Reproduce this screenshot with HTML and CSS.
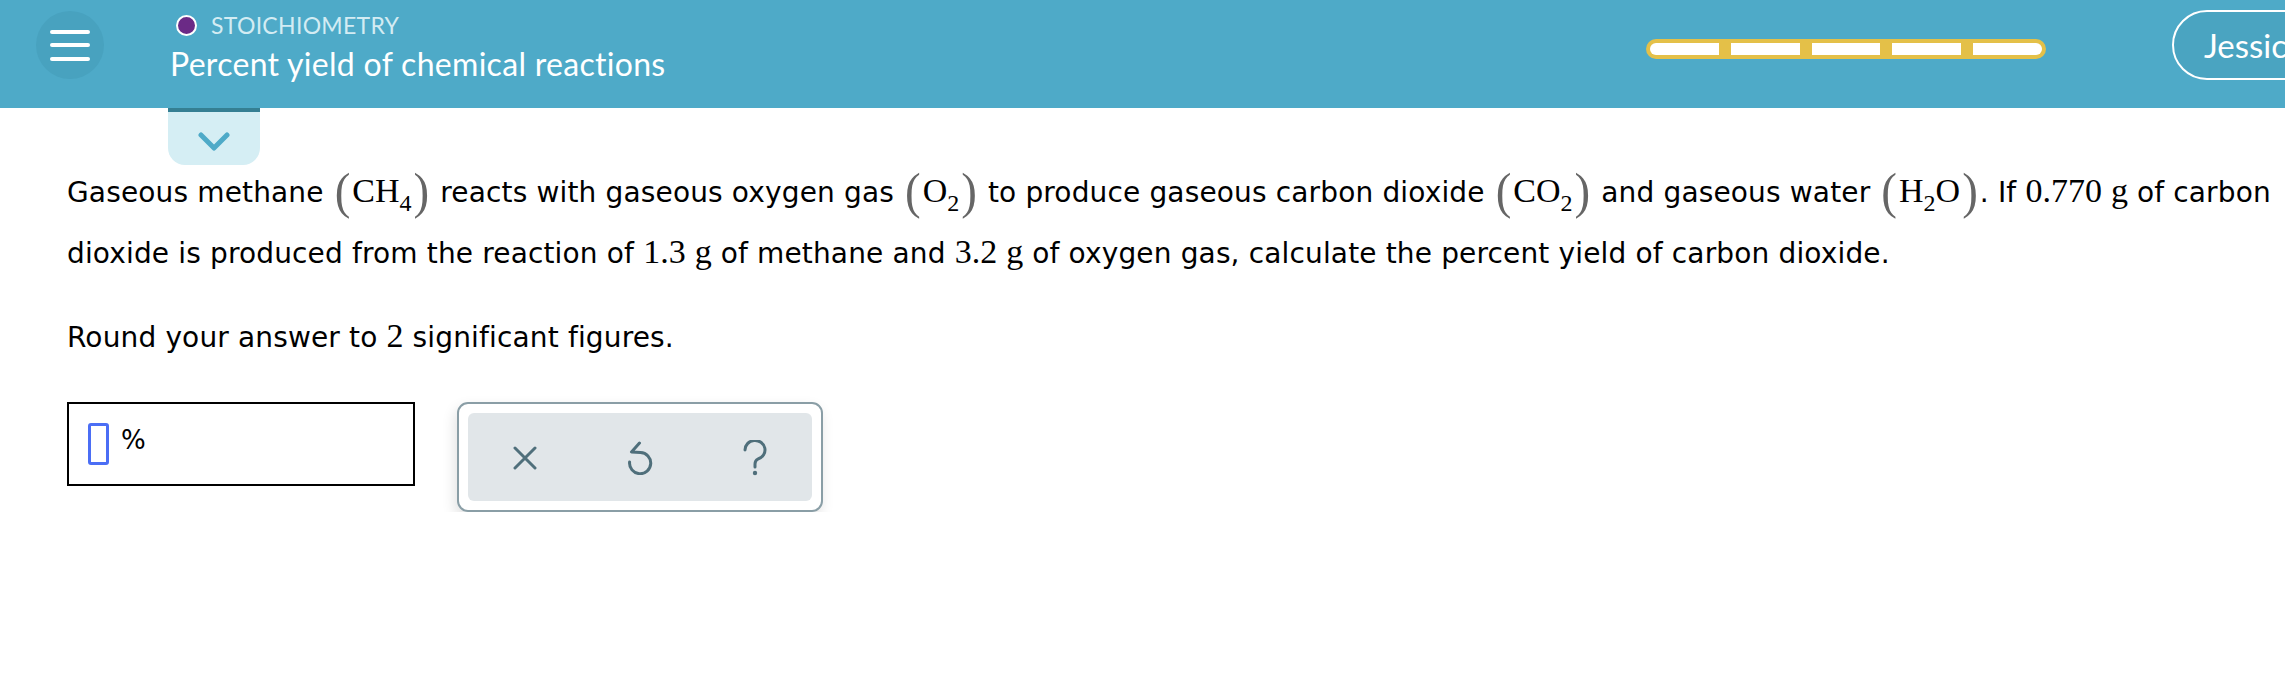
FILE: index.html
```html
<!DOCTYPE html>
<html lang="en">
<head>
<meta charset="utf-8">
<title>Percent yield of chemical reactions</title>
<link rel="stylesheet" href="styles.css">
</head>
<body>
<header class="topbar">
  <button class="menu-btn" aria-label="Menu">
    <span class="menu-line"></span>
    <span class="menu-line"></span>
    <span class="menu-line"></span>
  </button>
  <div class="title-block">
    <div class="topic"><span class="topic-dot"></span><span class="topic-name">STOICHIOMETRY</span></div>
    <div class="lesson">Percent yield of chemical reactions</div>
  </div>
  <div class="progress">
    <span class="seg"></span><span class="seg"></span><span class="seg"></span><span class="seg"></span><span class="seg"></span>
  </div>
  <div class="user-btn">Jessica</div>
</header>

<main class="content">
  <div class="tab">
    <svg class="chev" viewBox="0 0 32 20" width="32" height="20"><path d="M3 3 L16 16 L29 3" fill="none" stroke="#4eaac8" stroke-width="5" stroke-linecap="round" stroke-linejoin="round"/></svg>
  </div>

  <p class="problem first">Gaseous methane <span class="math"><span class="paren">(</span><span class="mi">CH<span class="sub">4</span></span><span class="paren">)</span></span> reacts with gaseous oxygen gas <span class="math"><span class="paren">(</span><span class="mi">O<span class="sub">2</span></span><span class="paren">)</span></span> to produce gaseous carbon dioxide <span class="math"><span class="paren">(</span><span class="mi">CO<span class="sub">2</span></span><span class="paren">)</span></span> and gaseous water <span class="math"><span class="paren">(</span><span class="mi">H<span class="sub">2</span>O</span><span class="paren">)</span></span>. If <span class="num">0.770<span class="unit-g">g</span></span> of carbon<br>dioxide is produced from the reaction of <span class="num">1.3<span class="unit-g">g</span></span> of methane and <span class="num">3.2<span class="unit-g">g</span></span> of oxygen gas, calculate the percent yield of carbon dioxide.</p>

  <p class="problem round">Round your answer to <span class="num">2</span> significant figures.</p>

  <div class="answer-row">
    <div class="answer-box">
      <span class="cursor"></span><span class="unit">%</span>
    </div>
    <div class="tools">
      <div class="tools-inner">
        <span class="tool">
          <svg viewBox="0 0 24 24" width="24" height="24"><path d="M2 2 L22 22 M22 2 L2 22" fill="none" stroke="#4f6f7b" stroke-width="3" stroke-linecap="round"/></svg>
        </span>
        <span class="tool">
          <svg viewBox="0 0 26 34" width="26" height="34"><path d="M12.5 2 L4.5 11 L13.5 11.5 A 10.6 10.6 0 1 1 2.6 21" fill="none" stroke="#4f6f7b" stroke-width="3" stroke-linecap="round" stroke-linejoin="round"/></svg>
        </span>
        <span class="tool">
          <svg viewBox="0 0 24 36" width="24" height="36"><path d="M2 10 A 10 9.5 0 1 1 15 19 Q 12 20.5 12 24 L 12 27" fill="none" stroke="#4f6f7b" stroke-width="3" stroke-linecap="round"/><circle cx="12" cy="33" r="2.2" fill="#4f6f7b"/></svg>
        </span>
      </div>
    </div>
  </div>
</main>
</body>
</html>
```

FILE: styles.css
```css
html, body {
  margin: 0;
  padding: 0;
  background: #ffffff;
  overflow: hidden;
}

body {
  font-family: "DejaVu Sans", Verdana, sans-serif;
  color: #000;
}

.topbar {
  height: 108px;
  background: #4eaac8;
  display: flex;
  align-items: flex-start;
  overflow: hidden;
  font-family: Lato, "Open Sans", sans-serif;
  color: #fff;
}

.menu-btn {
  flex-shrink: 0;
  width: 68px;
  height: 68px;
  margin: 11px 0 0 36px;
  border: none;
  border-radius: 50%;
  background: #48a2bf;
  padding: 0;
  display: flex;
  flex-direction: column;
  align-items: center;
  justify-content: center;
  gap: 9.5px;
}

.menu-line {
  display: block;
  width: 40px;
  height: 4px;
  border-radius: 2px;
  background: #fff;
}

.title-block {
  margin: 12px 0 0 66px;
  flex: 1;
}

.topic {
  display: flex;
  align-items: center;
  height: 26px;
  gap: 14px;
  margin-left: 6px;
}

.topic-dot {
  width: 17px;
  height: 17px;
  border-radius: 50%;
  background: #6b2a86;
  border: 2px solid #fff;
}

.topic-name {
  font-size: 23px;
  letter-spacing: 0.3px;
  color: #d3ecf3;
}

.lesson {
  margin-top: 8px;
  font-size: 32px;
  letter-spacing: 0.3px;
  line-height: 36px;
  color: #fff;
}

.progress {
  flex-shrink: 0;
  margin-top: 39px;
  width: 392px;
  height: 12px;
  padding: 4px;
  border-radius: 10px;
  background: #e4c048;
  display: flex;
  gap: 12px;
}

.seg {
  flex: 1;
  background: #fff;
}

.seg:first-child {
  border-radius: 6px 0 0 6px;
}

.seg:last-child {
  border-radius: 0 6px 6px 0;
}

.user-btn {
  flex-shrink: 0;
  margin: 10px -141px 0 126px;
  width: 220px;
  height: 66px;
  border: 2px solid #fff;
  border-radius: 35px;
  background: #4aa4c1;
  box-sizing: content-box;
  padding-left: 30px;
  font-size: 33px;
  line-height: 66px;
  color: #fff;
}

.content {
  padding-left: 67px;
}

.tab {
  margin-left: 101px;
  width: 92px;
  height: 57px;
  background: #d5eef4;
  border-top: 4px solid #357f93;
  box-sizing: border-box;
  border-radius: 0 0 17px 17px;
  display: flex;
  justify-content: center;
  padding-top: 20px;
}

.chev {
  display: block;
}

.problem {
  margin: 0;
  font-size: 28px;
  letter-spacing: 0.15px;
  line-height: 61px;
  white-space: nowrap;
}

.first {
  margin-top: -3px;
}

.round {
  margin-top: 23px;
}

.math {
  line-height: 0;
  letter-spacing: 0;
  font-family: "Liberation Serif", "Times New Roman", serif;
}

.paren {
  font-size: 47px;
  color: #666;
  display: inline-block;
  transform: scaleY(1.1);
  vertical-align: -4px;
  padding: 0 2px;
}

.mi {
  font-size: 34px;
}

.sub {
  font-size: 24px;
  vertical-align: -9px;
}

.num {
  font-family: "Liberation Serif", "Times New Roman", serif;
  font-size: 34px;
  letter-spacing: 0;
  line-height: 0;
}

.unit-g {
  margin-left: 9px;
}

.answer-row {
  display: flex;
  align-items: flex-start;
  gap: 42px;
  margin-top: 34px;
}

.answer-box {
  width: 325px;
  height: 80px;
  border: 2px solid #000;
  display: flex;
  align-items: center;
  padding-left: 19px;
  box-sizing: content-box;
  gap: 12px;
}

.cursor {
  width: 15px;
  height: 36px;
  border: 3px solid #4b6ef5;
  border-radius: 3px;
}

.unit {
  font-size: 26px;
  margin-top: -8px;
}

.tools {
  width: 344px;
  height: 88px;
  padding: 9px;
  border: 2px solid #8a9ea6;
  border-radius: 11px;
  box-shadow: -2px 6px 14px rgba(0, 0, 0, 0.12);
}

.tools-inner {
  height: 100%;
  background: #e1e6e9;
  border-radius: 6px;
  display: grid;
  grid-template-columns: repeat(3, 1fr);
  align-items: center;
  justify-items: center;
}

.tool {
  display: flex;
  margin-top: 2px;
}
```
